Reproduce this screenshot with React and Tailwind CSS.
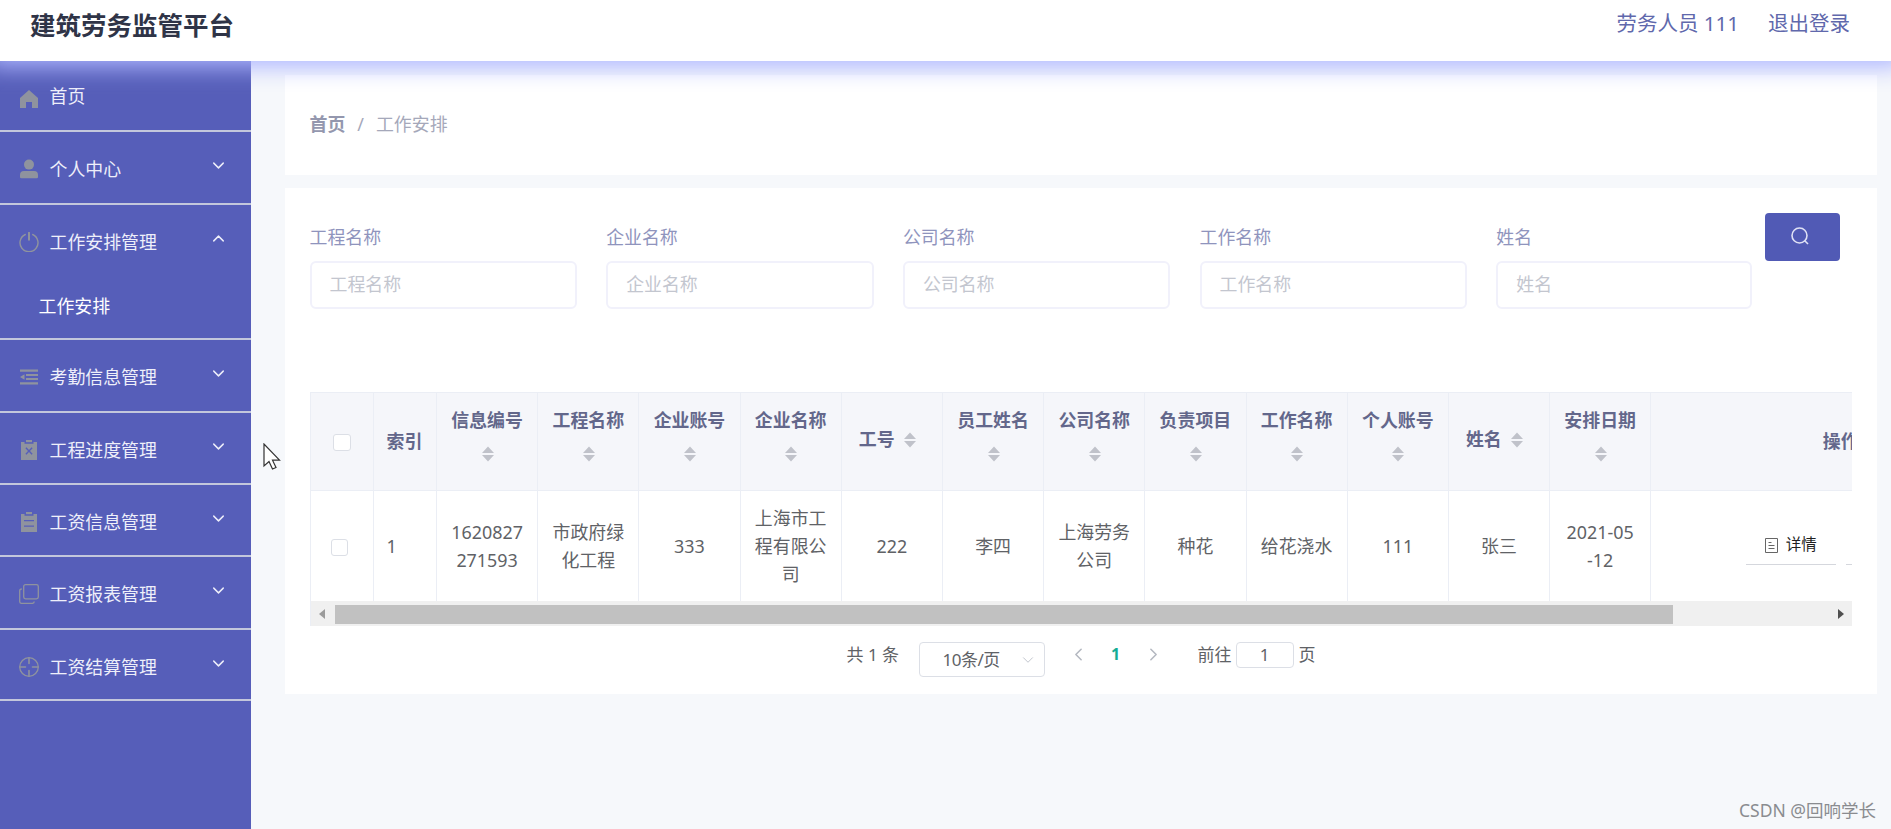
import React from "react";
import { ChevronDown, ChevronLeft, ChevronRight, ChevronUp } from "lucide-react";

const icons = {
  home: <path fill="currentColor" d="M10 1 19 9v10h-6v-6H7v6H1V9z" />,
  user: (
    <g fill="currentColor">
      <circle cx="10" cy="5.6" r="5" />
      <path d="M1 16a4 4 0 0 1 4-4h10a4 4 0 0 1 4 4v2a1.3 1.3 0 0 1-1.3 1.3H2.3A1.3 1.3 0 0 1 1 18z" />
    </g>
  ),
  power: (
    <g fill="none" stroke="currentColor" strokeWidth="1.4" strokeLinecap="round">
      <path d="M6.3 2.5a9 9 0 1 0 7.4 0" />
      <path d="M10 .7v7" strokeWidth="2" />
    </g>
  ),
  fold: (
    <path
      fill="currentColor"
      d="M1 2.500h18v2.300H1zM7 7h12v2H7zM7 11h12v2H7zM1 15.200h18v2.300H1zM1 10l4.500-2.700v5.400z"
    />
  ),
  release: (
    <g fill="currentColor">
      <path d="M7 0h6v2.2H7z" />
      <path
        fillRule="evenodd"
        d="M2 2h3.500v1.700h9V2H18v18H2zM6.400 8.300 9 11l-2.600 2.700 1 1L10 12l2.600 2.700 1-1L11 11l2.600-2.700-1-1L10 10 7.400 7.300z"
      />
    </g>
  ),
  order: (
    <g fill="currentColor">
      <path d="M7 0h6v2.2H7z" />
      <path fillRule="evenodd" d="M2 2h3.500v1.700h9V2H18v18H2zM5 8v1.300h10V8zM5 13.500v1.300h10v-1.300z" />
    </g>
  ),
  copy: (
    <g fill="none" stroke="currentColor" strokeWidth="1.3">
      <rect x="4.700" y=".7" width="14.600" height="14.200" rx="1.800" />
      <path d="M2.800 5C1.300 5 .7 5.800.7 7v10.400c0 1.300.8 2 2 2H13c1.500 0 2.200-.7 2.200-2" />
    </g>
  ),
  aim: (
    <g fill="none" stroke="currentColor" strokeWidth="1.3" strokeLinecap="round">
      <circle cx="10" cy="10" r="9.300" />
      <path d="M10 1v5.500M10 13.500V19M1 10h5.500M13.500 10H19" strokeWidth="1.600" />
    </g>
  ),
};

const menus = [
  { name: "个人中心", icon: "user", height: "h-[73px]" },
  { name: "工作安排管理", icon: "power", height: "h-[135px]", children: ["工作安排"] },
  { name: "考勤信息管理", icon: "fold", height: "h-[73px]" },
  { name: "工程进度管理", icon: "release", height: "h-[72px]" },
  { name: "工资信息管理", icon: "order", height: "h-[72px]" },
  { name: "工资报表管理", icon: "copy", height: "h-[73px]" },
  { name: "工资结算管理", icon: "aim", height: "h-[71px]" },
];

const fields = ["工程名称", "企业名称", "公司名称", "工作名称"];

const columns = [
  { title: "信息编号", lines: ["1620827", "271593"] },
  { title: "工程名称", lines: ["市政府绿", "化工程"] },
  { title: "企业账号", lines: ["333"] },
  { title: "企业名称", lines: ["上海市工", "程有限公", "司"] },
  { title: "工号", lines: ["222"] },
  { title: "员工姓名", lines: ["李四"] },
  { title: "公司名称", lines: ["上海劳务", "公司"] },
  { title: "负责项目", lines: ["种花"] },
  { title: "工作名称", lines: ["给花浇水"] },
  { title: "个人账号", lines: ["111"] },
  { title: "姓名", lines: ["张三"] },
  { title: "安排日期", lines: ["2021-05", "-12"] },
];

function MenuIcon({ name }) {
  return (
    <svg viewBox="0 0 20 20" className="w-5 h-5 text-[#8f939e] shrink-0">
      {icons[name]}
    </svg>
  );
}

function SortIcon() {
  return (
    <svg viewBox="0 0 12 16" className="w-3 h-4 shrink-0" fill="#c0c2ca">
      <path d="M6 .5l6 6.500H0zM6 15.500l6-6.500H0z" />
    </svg>
  );
}

function Header() {
  return (
    <header className="relative z-10 h-[61px] shrink-0 bg-white flex justify-between pl-[30px] pr-[41px] shadow-[0_-6px_22px_12px_#aeb6ff]">
      <h1 className="text-[25.5px] leading-[50px] font-bold text-[#2f3447]">建筑劳务监管平台</h1>
      <div className="flex gap-[29px] text-[20.5px] leading-[46px] text-[#6068ac]">
        <span>劳务人员 111</span>
        <span>退出登录</span>
      </div>
    </header>
  );
}

function Sidebar() {
  return (
    <aside className="w-[251px] shrink-0 bg-[#565eb9] text-[#eeeffa] text-[17.9px]">
      <div className="h-[71px] border-b-2 border-[#c3c7dc] flex items-center pl-[18.5px] pt-[6px] gap-[11px]">
        <MenuIcon name="home" />
        <span className="leading-6 -mt-[6px]">首页</span>
      </div>
      {menus.map((menu) => (
        <div key={menu.name} className={`${menu.height} border-b-2 border-[#c3c7dc]`}>
          <div className="h-[73px] flex items-center pl-[18.5px] pr-[23px] pt-px gap-[11px] -mb-[3px]">
            <MenuIcon name={menu.icon} />
            <span className="leading-6 flex-1">{menu.name}</span>
            {menu.children ? (
              <ChevronUp size={19} strokeWidth={1.8} className="mb-2" />
            ) : (
              <ChevronDown size={19} strokeWidth={1.8} className="mb-2" />
            )}
          </div>
          {menu.children?.map((child) => (
            <div key={child} className="pl-[38.5px] pt-[19px] leading-6 text-white">
              {child}
            </div>
          ))}
        </div>
      ))}
    </aside>
  );
}

function SearchForm() {
  return (
    <div className="flex h-[204px] pt-[25px]">
      {fields.map((field) => (
        <div key={field} className="w-[267.5px] mr-[29.2px] shrink-0">
          <div className="h-12 leading-[48px] text-[#8f94bd]">{field}</div>
          <div className="h-12 border-2 border-[#f1f1fb] rounded-md pl-[18px] leading-[43px] text-[#c3c6cf]">
            {field}
          </div>
        </div>
      ))}
      <div className="w-[256px] mr-[12.5px] shrink-0">
        <div className="h-12 leading-[48px] text-[#8f94bd]">姓名</div>
        <div className="h-12 border-2 border-[#f1f1fb] rounded-md pl-[18px] leading-[43px] text-[#c3c6cf]">
          姓名
        </div>
      </div>
      <button className="w-[75px] h-12 rounded bg-[#515ab5] flex items-center justify-center pb-[2px] pr-[5px]">
        <svg viewBox="0 0 18 18" className="w-[18px] h-[18px]" fill="none" stroke="#dfe1f5" strokeWidth="1.6">
          <circle cx="8.5" cy="8.5" r="7.5" />
          <path d="M13.5 13.5 17 17" />
        </svg>
      </button>
    </div>
  );
}

function DataTable() {
  return (
    <div className="w-[1542px] overflow-hidden border-l border-[#ebeef5]">
      <div className="flex h-[99px] bg-[#f5f6fa] border-y border-[#ebeef5] font-bold text-[#63678b]">
        <div className="w-[63px] shrink-0 border-r border-[#ebeef5] flex items-center justify-center">
          <span className="w-[18px] h-[17px] bg-white border border-[#dcdfe6] rounded-[3px] mt-[2px]" />
        </div>
        <div className="w-[63.5px] shrink-0 border-r border-[#ebeef5] flex items-center pl-[13px]">索引</div>
        {columns.map(({ title }) =>
          title.length > 2 ? (
            <div key={title} className="w-[101.2px] shrink-0 border-r border-[#ebeef5] flex flex-col items-center pt-[13px]">
              <span className="leading-[28px] whitespace-nowrap">{title}</span>
              <span className="mt-[12px] pl-px">
                <SortIcon />
              </span>
            </div>
          ) : (
            <div key={title} className="w-[101.2px] shrink-0 border-r border-[#ebeef5] flex items-center pl-[17px] pb-[4px] gap-[9px]">
              {title}
              <SortIcon />
            </div>
          )
        )}
        <div className="w-[380px] shrink-0 flex items-center pl-[171.5px]">操作</div>
      </div>

      <div className="flex h-[110px] text-[#606266]">
        <div className="w-[63px] shrink-0 border-r border-[#ebeef5] flex items-center pl-[20px]">
          <span className="w-[17px] h-[17px] bg-white border border-[#dcdfe6] rounded-[3px] mt-[2px]" />
        </div>
        <div className="w-[63.5px] shrink-0 border-r border-[#ebeef5] flex items-center pl-[13px]">1</div>
        {columns.map(({ title, lines }) => (
          <div
            key={title}
            className="w-[101.2px] shrink-0 border-r border-[#ebeef5] flex flex-col items-center justify-center leading-[28px]"
          >
            {lines.map((line) => (
              <span key={line}>{line}</span>
            ))}
          </div>
        ))}
        <div className="w-[380px] shrink-0 flex items-start pt-[36px] pl-[94.5px] gap-[10px]">
          <div className="w-[90px] h-[38px] border-b border-[#d5d7dd] flex items-center justify-center gap-2 pb-px text-[15.5px] text-[#1f1f1f]">
            <svg viewBox="0 0 13 15" className="w-[13px] h-[15px]" fill="none" stroke="#666" strokeWidth="1">
              <path d="M.5.5h12v14H.5zM3.5 4.5h3M3.5 7.5h6M3.5 10.5h6" />
            </svg>
            <span>详情</span>
          </div>
          <div className="w-[90px] h-[38px] border-b border-[#d5d7dd]" />
        </div>
      </div>

      <div className="h-[25px] bg-[#f0f0f0] flex items-center justify-between pl-[8px] pr-[8px]">
        <svg viewBox="0 0 6 10" className="w-[6px] h-[10px]" fill="#9b9b9b">
          <path d="M6 0v10L0 5z" />
        </svg>
        <span className="h-[19px] w-[1338px] bg-[#c1c1c1] ml-[10px] mr-auto mt-px" />
        <svg viewBox="0 0 6 10" className="w-[6px] h-[10px]" fill="#505050">
          <path d="M0 0v10l6-5z" />
        </svg>
      </div>
    </div>
  );
}

function Pagination() {
  return (
    <div className="flex items-start pt-[16px] pl-[537px] text-[17px] leading-[26px] text-[#606266]">
      <span className="w-[72px]">共 1 条</span>
      <div className="w-[126px] h-[35px] border border-[#dcdfe6] rounded flex items-center pl-[23px] pr-[7px] justify-between">
        <span className="tracking-[-0.5px]">10条/页</span>
        <ChevronDown size={18} strokeWidth={1.3} className="text-[#c0c4cc]" />
      </div>
      <ChevronLeft size={21} strokeWidth={1.8} className="text-[#b4b8c0] ml-[23px] mt-[2px]" />
      <span className="w-[54px] text-center font-bold text-[16px] leading-[25px] text-[#13ac94]">1</span>
      <ChevronRight size={21} strokeWidth={1.8} className="text-[#b4b8c0] mt-[2px]" />
      <span className="ml-[34px]">前往</span>
      <span className="ml-[4px] w-[58px] h-[26px] border border-[#dcdfe6] rounded text-center leading-[23px]">1</span>
      <span className="ml-[5px]">页</span>
    </div>
  );
}

export default function App() {
  return (
    <div className="w-[1891px] h-[829px] overflow-hidden relative flex flex-col bg-[#f6f8fb] font-['Noto_Sans','Noto_Sans_CJK_SC',sans-serif]">
      <Header />
      <div className="flex flex-1">
        <Sidebar />
        <main className="flex-1 pl-[33.5px] pr-[14px] pt-[14px] text-[17.9px]">
          <div className="h-[100px] bg-white pl-[25px] pb-px flex items-center text-[#a5a8ba]">
            <span className="font-bold text-[#9497ae]">首页</span>
            <span className="mx-[12px]">/</span>
            <span>工作安排</span>
          </div>
          <div className="mt-[13px] h-[506px] bg-white pl-[25px]">
            <SearchForm />
            <DataTable />
            <Pagination />
          </div>
        </main>
      </div>

      {/* 鼠标指针 */}
      <svg viewBox="0 0 18 27" className="absolute left-[263px] top-[443px] w-[18px] h-[27px]">
        <path d="M1 1v22l5-4.5 3.5 7.5 3.5-1.5-3.5-7.3H16.5z" fill="#fff" stroke="#333" strokeWidth="1.2" />
      </svg>

      <span className="absolute right-[15px] bottom-[6px] text-[17.5px] leading-[26px] text-[#8a8c90]">
        CSDN @回响学长
      </span>
    </div>
  );
}
